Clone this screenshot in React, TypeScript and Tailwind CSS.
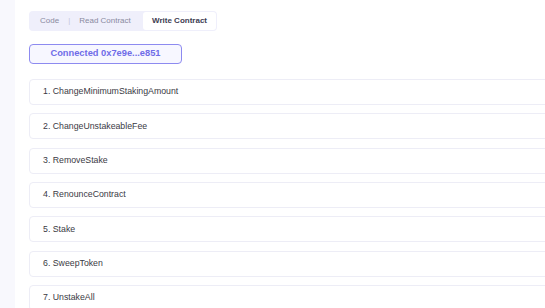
import React from "react";

const methods = [
  "ChangeMinimumStakingAmount",
  "ChangeUnstakeableFee",
  "RemoveStake",
  "RenounceContract",
  "Stake",
  "SweepToken",
  "UnstakeAll",
];

function Tabs() {
  return (
    <div className="flex items-center h-[20px] w-[188px] rounded-[4px] bg-[#efeffb] p-[1px] text-[8px] text-[#8a8aa0]">
      <div className="pl-[10px] pr-[9px]">Code</div>
      <div className="text-[#c5c5da]">|</div>
      <div className="px-[9px]">Read Contract</div>
      <div className="ml-auto h-full flex items-center px-[9px] rounded-[3px] bg-white font-semibold text-[#3d3d52]">
        Write Contract
      </div>
    </div>
  );
}

export default function App() {
  return (
    <div className="flex w-[545px] h-[308px] overflow-hidden bg-white" style={{ fontFamily: '"Liberation Sans", Arial, sans-serif' }}>
      <div className="w-[15px] shrink-0 bg-[#f8f8fd]" />
      <div className="flex-1 pl-[14px] pt-[11px] min-w-0">
        <Tabs />
        <div className="mt-[13px] w-[153px] h-[20px] flex items-center justify-center rounded-[4px] border border-[#8d8af0] bg-[#f7f7ff] text-[9.3px] font-bold text-[#6f6ce8]">
          Connected 0x7e9e...e851
        </div>
        <div className="mt-[15px] flex flex-col gap-[8.33px] w-[540px]">
          {methods.map((m, i) => (
            <div
              key={m}
              className="h-[26px] flex items-center pl-[13px] rounded-[4px] border border-[#ededf6] bg-white text-[8.75px] text-[#3a3a44]"
            >
              {i + 1}. {m}
            </div>
          ))}
        </div>
      </div>
    </div>
  );
}
